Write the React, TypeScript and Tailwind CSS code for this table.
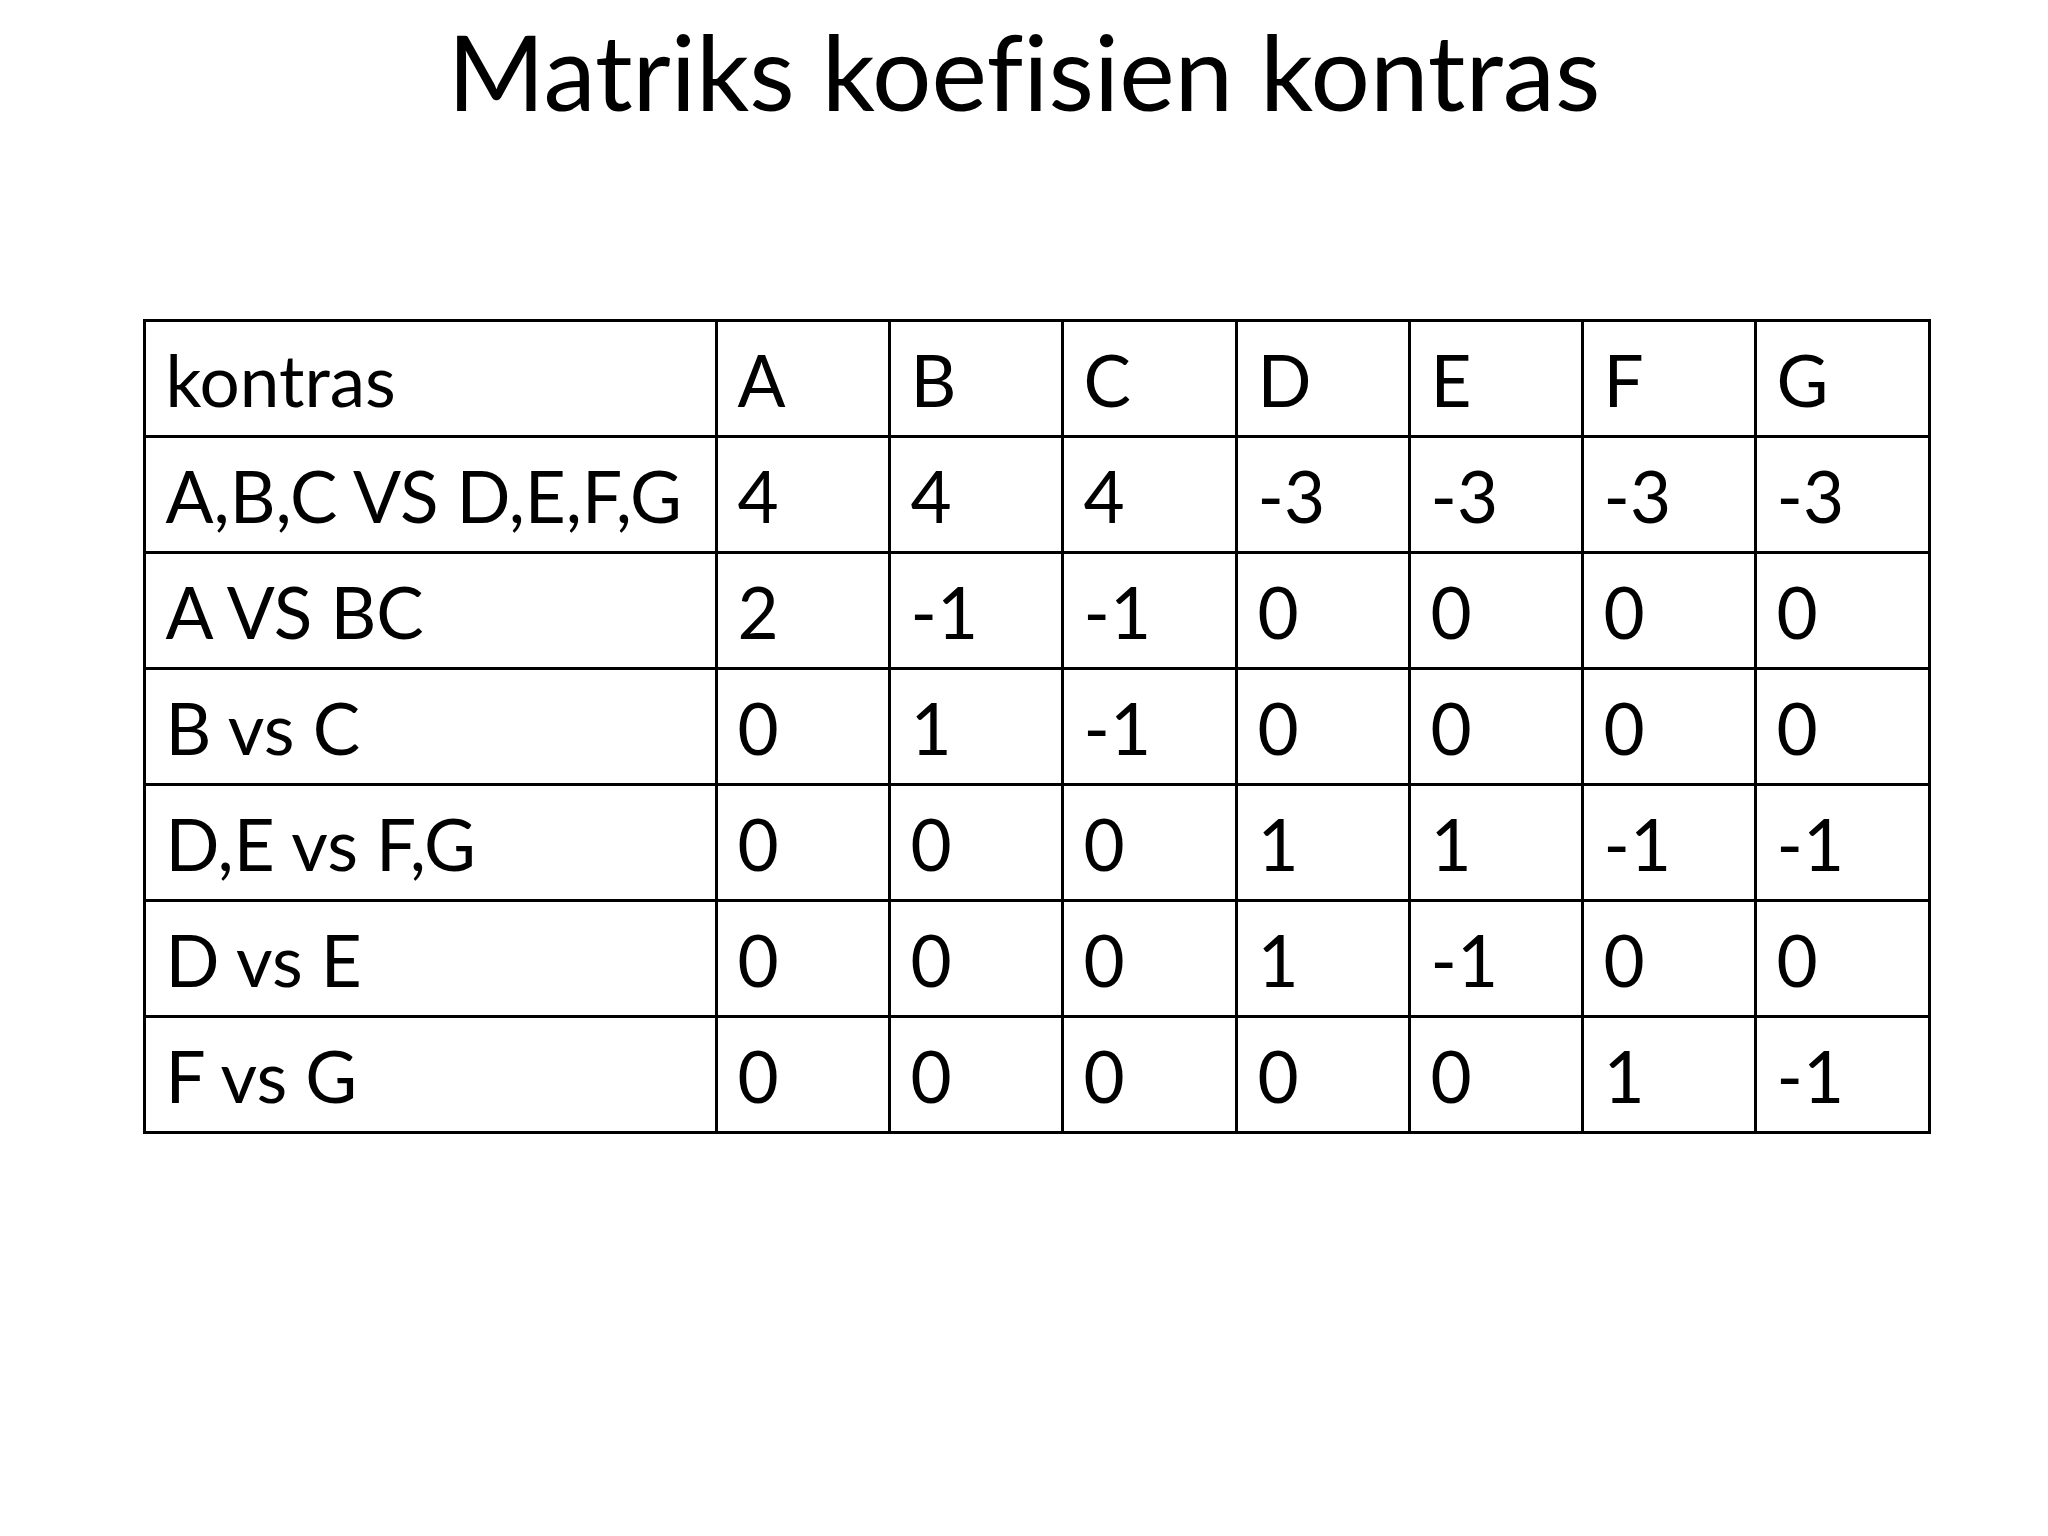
import React from "react";

const header = ["kontras", "A", "B", "C", "D", "E", "F", "G"];
const rows: string[][] = [
  ["A,B,C VS D,E,F,G", "4", "4", "4", "-3", "-3", "-3", "-3"],
  ["A VS BC", "2", "-1", "-1", "0", "0", "0", "0"],
  ["B vs C", "0", "1", "-1", "0", "0", "0", "0"],
  ["D,E vs F,G", "0", "0", "0", "1", "1", "-1", "-1"],
  ["D vs E", "0", "0", "0", "1", "-1", "0", "0"],
  ["F vs G", "0", "0", "0", "0", "0", "1", "-1"],
];

export default function App() {
  const all = [header, ...rows];
  return (
    <div
      className="w-[2048px] h-[1536px] bg-white text-black flex flex-col items-center [font-variant-ligatures:none]"
      style={{ fontFamily: "Lato, 'Open Sans', sans-serif" }}
    >
      <h1 className="pt-[8px] text-[105px] leading-[125px] font-normal">
        Matriks koefisien kontras
      </h1>
      <table className="mt-[186px] ml-[25px] table-fixed border-collapse w-[1785px] border-[3px] border-black">
        <colgroup>
          <col className="w-[572px]" />
          <col className="w-[173px]" />
          <col className="w-[173px]" />
          <col className="w-[174px]" />
          <col className="w-[173px]" />
          <col className="w-[173px]" />
          <col className="w-[173px]" />
          <col className="w-[174px]" />
        </colgroup>
        <tbody>
          {all.map((r, i) => (
            <tr key={i} className="h-[116px]">
              {r.map((c, j) => (
                <td
                  key={j}
                  className="border-[3px] border-black align-top pl-[20px] pt-[15px] text-[71px] leading-[85px] whitespace-nowrap"
                >
                  {c}
                </td>
              ))}
            </tr>
          ))}
        </tbody>
      </table>
    </div>
  );
}
